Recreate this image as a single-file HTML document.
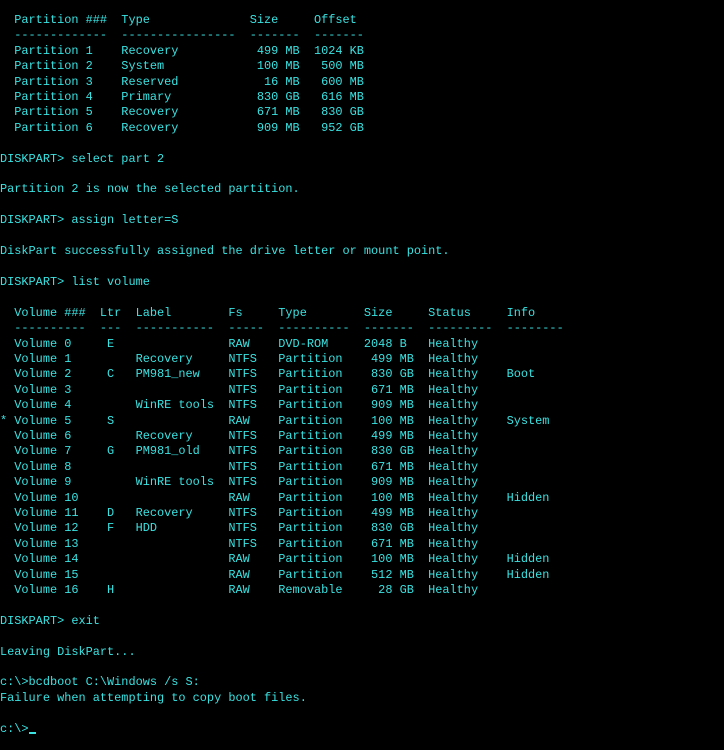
<!DOCTYPE html>
<html><head><meta charset="utf-8"><style>
html,body{margin:0;padding:0;background:#000;width:724px;height:750px;overflow:hidden}
pre{margin:0;padding:13px 0 0 0;font-family:"Liberation Mono",monospace;font-size:11.9px;line-height:15.4px;color:#3ae2e2;white-space:pre}
.cur{display:inline-block;width:7px;height:2px;background:#3ae2e2;vertical-align:-2px}
</style></head><body><pre>  Partition ###  Type              Size     Offset
  -------------  ----------------  -------  -------
  Partition 1    Recovery           499 MB  1024 KB
  Partition 2    System             100 MB   500 MB
  Partition 3    Reserved            16 MB   600 MB
  Partition 4    Primary            830 GB   616 MB
  Partition 5    Recovery           671 MB   830 GB
  Partition 6    Recovery           909 MB   952 GB

DISKPART&gt; select part 2

Partition 2 is now the selected partition.

DISKPART&gt; assign letter=S

DiskPart successfully assigned the drive letter or mount point.

DISKPART&gt; list volume

  Volume ###  Ltr  Label        Fs     Type        Size     Status     Info
  ----------  ---  -----------  -----  ----------  -------  ---------  --------
  Volume 0     E                RAW    DVD-ROM     2048 B   Healthy
  Volume 1         Recovery     NTFS   Partition    499 MB  Healthy
  Volume 2     C   PM981_new    NTFS   Partition    830 GB  Healthy    Boot
  Volume 3                      NTFS   Partition    671 MB  Healthy
  Volume 4         WinRE tools  NTFS   Partition    909 MB  Healthy
* Volume 5     S                RAW    Partition    100 MB  Healthy    System
  Volume 6         Recovery     NTFS   Partition    499 MB  Healthy
  Volume 7     G   PM981_old    NTFS   Partition    830 GB  Healthy
  Volume 8                      NTFS   Partition    671 MB  Healthy
  Volume 9         WinRE tools  NTFS   Partition    909 MB  Healthy
  Volume 10                     RAW    Partition    100 MB  Healthy    Hidden
  Volume 11    D   Recovery     NTFS   Partition    499 MB  Healthy
  Volume 12    F   HDD          NTFS   Partition    830 GB  Healthy
  Volume 13                     NTFS   Partition    671 MB  Healthy
  Volume 14                     RAW    Partition    100 MB  Healthy    Hidden
  Volume 15                     RAW    Partition    512 MB  Healthy    Hidden
  Volume 16    H                RAW    Removable     28 GB  Healthy

DISKPART&gt; exit

Leaving DiskPart...

c:\&gt;bcdboot C:\Windows /s S:
Failure when attempting to copy boot files.

c:\&gt;<span class="cur"></span></pre></body></html>
